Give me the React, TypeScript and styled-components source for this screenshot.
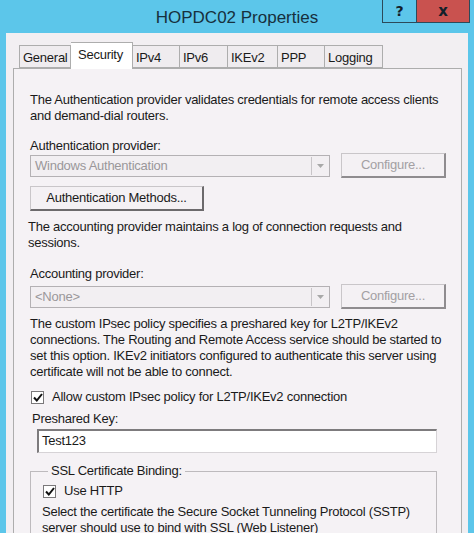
import React from "react";
import styled, { createGlobalStyle } from "styled-components";

const GlobalStyle = createGlobalStyle`
  html, body {
    margin: 0;
    padding: 0;
    background: #5cc6ea;
  }
  body {
    font-family: "Liberation Sans", Arial, sans-serif;
  }
`;

const tabs = [
  { name: "General", width: 52 },
  { name: "Security", width: 62 },
  { name: "IPv4", width: 47 },
  { name: "IPv6", width: 48 },
  { name: "IKEv2", width: 50 },
  { name: "PPP", width: 47 },
  { name: "Logging", width: 58 },
];

const Check = () => (
  <CheckBox>
    <svg width="10" height="9" viewBox="0 0 10 9">
      <path d="M1 4.5l2.8 3L9 1" stroke="#111" strokeWidth="2" fill="none" />
    </svg>
  </CheckBox>
);

const Arrow = () => (
  <ComboArrow>
    <svg width="7" height="4" viewBox="0 0 7 4">
      <path d="M0 0h7L3.5 4z" fill="#a8a8a8" />
    </svg>
  </ComboArrow>
);

const App = () => {
  return (
    <Window>
      <GlobalStyle />
      <TitleBar>
        <span />
        <Title>HOPDC02 Properties</Title>
        <Caption>
          <CaptionButton>?</CaptionButton>
          <CaptionButton $close>x</CaptionButton>
        </Caption>
      </TitleBar>
      <Client>
        <TabStrip>
          {tabs.map((t) => (
            <Tab key={t.name} $active={t.name === "Security"} $width={t.width}>
              {t.name}
            </Tab>
          ))}
        </TabStrip>
        <Panel>
          <Para>
            The Authentication provider validates credentials for remote access clients
            <br />
            and demand-dial routers.
          </Para>
          <Label $top={14}>Authentication provider:</Label>
          <FieldRow>
            <Combo>
              <ComboText>Windows Authentication</ComboText>
              <Arrow />
            </Combo>
            <Button $disabled $width={105}>Configure...</Button>
          </FieldRow>
          <Button $width={174} $top={8}>
            Authentication Methods...
          </Button>
          <Para $top={8} $shift={-2}>
            The accounting provider maintains a log of connection requests and
            <br />
            sessions.
          </Para>
          <Label $top={15}>Accounting provider:</Label>
          <FieldRow $top={2}>
            <Combo>
              <ComboText>&lt;None&gt;</ComboText>
              <Arrow />
            </Combo>
            <Button $disabled $width={105}>Configure...</Button>
          </FieldRow>
          <Para $top={7}>
            The custom IPsec policy specifies a preshared key for L2TP/IKEv2
            <br />
            connections. The Routing and Remote Access service should be started to
            <br />
            set this option. IKEv2 initiators configured to authenticate this server using
            <br />
            certificate will not be able to connect.
          </Para>
          <CheckRow $top={9}>
            <Check />
            Allow custom IPsec policy for L2TP/IKEv2 connection
          </CheckRow>
          <Label $top={6} $shift={2}>Preshared Key:</Label>
          <TextBox>Test123</TextBox>
          <Group>
            <Legend>SSL Certificate Binding:</Legend>
            <CheckRow $top={4}>
              <Check />
              Use HTTP
            </CheckRow>
            <Para $top={5}>
              Select the certificate the Secure Socket Tunneling Protocol (SSTP)
              <br />
              server should use to bind with SSL (Web Listener)
            </Para>
          </Group>
        </Panel>
      </Client>
    </Window>
  );
};

export default App;

const Window = styled.div`
  width: 474px;
  height: 533px;
  overflow: hidden;
  background: #5cc6ea;
  display: flex;
  flex-direction: column;
  letter-spacing: -0.25px;
`;

const TitleBar = styled.div`
  height: 33px;
  flex-shrink: 0;
  display: grid;
  grid-template-columns: 1fr auto 1fr;
  align-items: start;
`;

const Title = styled.div`
  font-size: 17px;
  line-height: 35px;
  color: #17303d;
  white-space: nowrap;
  letter-spacing: 0;
`;

const Caption = styled.div`
  justify-self: end;
  display: flex;
  margin-right: 4px;
`;

const CaptionButton = styled.div<{ $close?: boolean }>`
  width: ${(p) => (p.$close ? 52 : 33)}px;
  height: 22px;
  display: flex;
  align-items: center;
  justify-content: center;
  background: ${(p) => (p.$close ? "#c9524f" : "#5cc6ea")};
  border: 1px solid #2c4a5a;
  border-top: none;
  ${(p) => (p.$close ? "border-left: none;" : "")}
  color: #12202a;
  font-weight: 700;
  font-size: ${(p) => (p.$close ? 15 : 14)}px;
  font-family: "DejaVu Sans", sans-serif;
`;

const Client = styled.div`
  flex: 1;
  margin: 0 6px;
  background: #f2eff2;
  padding: 9px 6px 0 7px;
  display: flex;
  flex-direction: column;
  min-height: 0;
`;

const TabStrip = styled.div`
  display: flex;
  align-items: flex-end;
  padding-left: 6px;
  height: 26px;
  position: relative;
  z-index: 1;
`;

const Tab = styled.div<{ $active?: boolean; $width: number }>`
  width: ${(p) => p.$width}px;
  height: ${(p) => (p.$active ? 27 : 23)}px;
  box-sizing: border-box;
  padding: ${(p) => (p.$active ? "3px 0 0 7px" : "3px 0 0 3px")};
  margin-bottom: ${(p) => (p.$active ? -1 : 0)}px;
  border: 1px solid #adadad;
  border-bottom: ${(p) => (p.$active ? "none" : "1px solid #adadad")};
  background: ${(p) => (p.$active ? "#ffffff" : "#efecef")};
  font-size: 13px;
  line-height: 17px;
  color: #1a1a1a;
  white-space: nowrap;
  & + & {
    border-left: ${(p) => (p.$active ? "1px solid #adadad" : "none")};
  }
`;

const Panel = styled.div`
  flex: 1;
  border: 1px solid #adadad;
  border-bottom: none;
  background: #f5f2f5;
  padding: 23px 15px 0 16px;
  display: flex;
  flex-direction: column;
  align-items: flex-start;
  font-size: 13px;
  line-height: 16px;
  color: #1a1a1a;
`;

const Para = styled.div<{ $top?: number; $shift?: number }>`
  margin-top: ${(p) => p.$top ?? 0}px;
  margin-left: ${(p) => p.$shift ?? 0}px;
  white-space: nowrap;
`;

const Label = styled.div<{ $top?: number; $shift?: number }>`
  margin-top: ${(p) => p.$top ?? 0}px;
  margin-left: ${(p) => p.$shift ?? 0}px;
`;

const FieldRow = styled.div<{ $top?: number }>`
  display: flex;
  align-items: center;
  gap: 11px;
  margin-top: ${(p) => p.$top ?? -1}px;
`;

const Combo = styled.div`
  width: 300px;
  height: 22px;
  box-sizing: border-box;
  border: 1px solid #b4b1b4;
  background: #f2eff2;
  display: flex;
  align-items: stretch;
`;

const ComboText = styled.div`
  flex: 1;
  padding-left: 4px;
  line-height: 20px;
  color: #9a979a;
`;

const ComboArrow = styled.div`
  width: 16px;
  border-left: 1px solid #c8c5c8;
  display: flex;
  align-items: center;
  justify-content: center;
  margin: 1px;
`;

const Button = styled.div<{ $disabled?: boolean; $width: number; $top?: number }>`
  width: ${(p) => p.$width}px;
  height: 25px;
  margin-top: ${(p) => p.$top ?? 0}px;
  box-sizing: border-box;
  border: 1px solid #c9c6c9;
  border-right-color: ${(p) => (p.$disabled ? "#8f8c8f" : "#6c6a6c")};
  border-bottom-color: ${(p) => (p.$disabled ? "#8f8c8f" : "#6c6a6c")};
  border-right-width: 2px;
  border-bottom-width: 2px;
  background: #f4f1f4;
  display: flex;
  align-items: center;
  justify-content: center;
  color: ${(p) => (p.$disabled ? "#a3a0a3" : "#1a1a1a")};
`;

const CheckRow = styled.div<{ $top?: number }>`
  display: flex;
  align-items: center;
  gap: 8px;
  margin-top: ${(p) => p.$top ?? 0}px;
  margin-left: 1px;
`;

const CheckBox = styled.div`
  width: 13px;
  height: 13px;
  box-sizing: border-box;
  border: 1px solid #7a787a;
  background: #fff;
  display: flex;
  align-items: center;
  justify-content: center;
`;

const TextBox = styled.div`
  margin-top: 2px;
  margin-left: 7px;
  width: 400px;
  height: 24px;
  box-sizing: border-box;
  border: 1px solid #d6d3d6;
  border-top: 2px solid #7d7b7d;
  border-left: 2px solid #7d7b7d;
  background: #fff;
  padding-left: 3px;
  line-height: 20px;
`;

const Group = styled.fieldset`
  margin: 10px 0 0 0;
  width: 407px;
  box-sizing: border-box;
  border: 1px solid #bdbabd;
  padding: 0 10px 20px 11px;
  min-width: 0;
  display: flex;
  flex-direction: column;
  align-items: flex-start;
`;

const Legend = styled.legend`
  padding: 0 3px;
  margin-left: 6px;
  font-size: 13px;
  line-height: 16px;
`;
